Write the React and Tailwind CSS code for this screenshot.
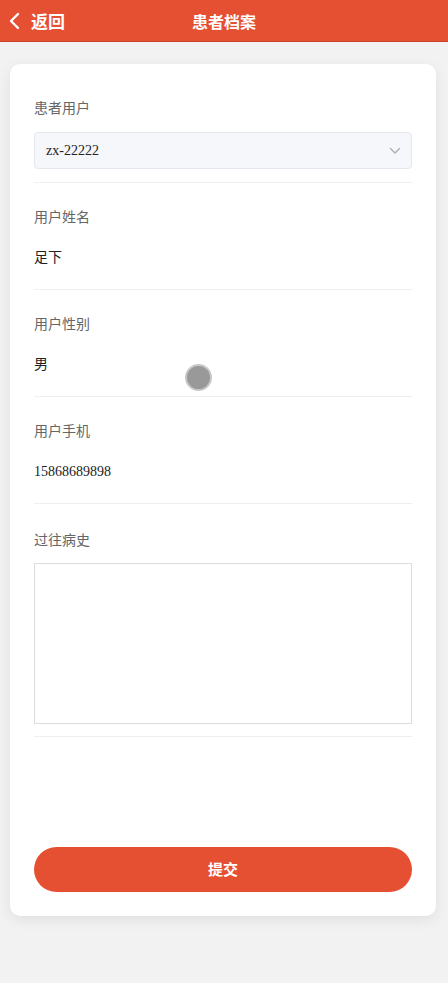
import React from "react";

const font = { fontFamily: '"Liberation Serif", "Noto Sans CJK SC", serif' };

function Section({ label, value }) {
  return (
    <div className="border-b border-[#efefef] pt-[25px] pb-[21px]">
      <div className="h-[20px] text-[14px] leading-[20px] text-[#666]">{label}</div>
      <div className="mt-[20px] h-[20px] text-[14px] leading-[20px] text-[#222]">{value}</div>
    </div>
  );
}

export default function App() {
  return (
    <div className="relative min-h-[983px] w-full bg-[#f2f2f2]" style={font}>
      <div className="relative flex h-[42px] items-center justify-center bg-[#e54f32] border-b border-[#c9432a]">
        <div className="absolute left-[8px] top-0 flex h-full items-center gap-[9px] text-white">
          <svg width="14" height="18" viewBox="0 0 14 18" fill="none">
            <path d="M10 2 L3 9 L10 16" stroke="white" strokeWidth="2.4" strokeLinecap="round" strokeLinejoin="round" />
          </svg>
          <span className="text-[17px] font-bold" style={{ fontFamily: '"Noto Sans CJK SC", sans-serif' }}>返回</span>
        </div>
        <span className="text-[16px] font-bold text-white" style={{ fontFamily: '"Noto Sans CJK SC", sans-serif' }}>患者档案</span>
      </div>

      <div className="ml-[10px] mr-[12px] mt-[22px] rounded-[10px] bg-white px-[24px] pb-[24px] shadow-[0_4px_14px_rgba(0,0,0,0.08)]">
        <div className="border-b border-[#efefef] pt-[35px] pb-[13px]">
          <div className="h-[20px] text-[14px] leading-[20px] text-[#666]">患者用户</div>
          <div className="mt-[13px] flex h-[37px] items-center justify-between rounded-[4px] border border-[#e4e7ed] bg-[#f5f7fa] pl-[11px] pr-[10px]">
            <span className="text-[14px] text-[#222]">zx-22222</span>
            <svg width="12" height="8" viewBox="0 0 12 8" fill="none">
              <path d="M1.5 1.5 L6 6 L10.5 1.5" stroke="#a8abb2" strokeWidth="1.3" strokeLinecap="round" strokeLinejoin="round" />
            </svg>
          </div>
        </div>
        <Section label="用户姓名" value="足下" />
        <Section label="用户性别" value="男" />
        <Section label="用户手机" value="15868689898" />
        <div className="border-b border-[#efefef] pt-[27px] pb-[12px]">
          <div className="h-[20px] text-[14px] leading-[20px] text-[#666]">过往病史</div>
          <div className="mt-[12px] h-[161px] border border-[#dcdcdc] bg-white"></div>
        </div>
        <button className="mt-[110px] flex h-[45px] w-full items-center justify-center rounded-full bg-[#e54f32] text-[15px] font-bold text-white" style={{ fontFamily: '"Noto Sans CJK SC", sans-serif' }}>
          提交
        </button>
      </div>

      <div className="absolute left-[185px] top-[364px] h-[27px] w-[27px] rounded-full border-[2px] border-[#c8c8c8] bg-[#999]"></div>
    </div>
  );
}
